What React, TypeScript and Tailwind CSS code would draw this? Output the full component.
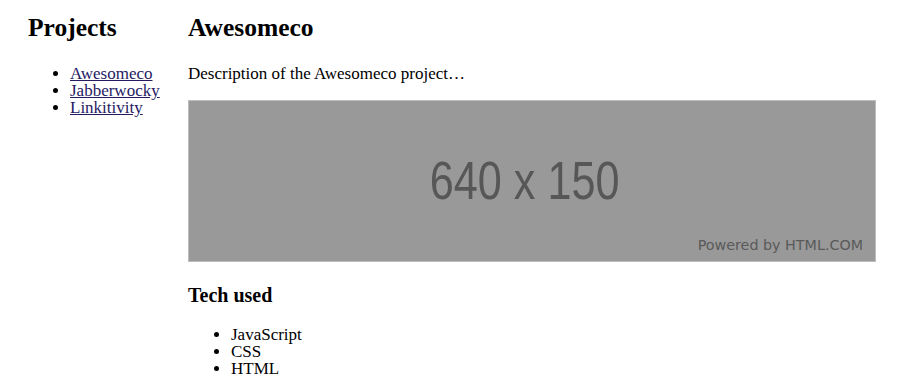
import React from 'react';

const projects = ['Awesomeco', 'Jabberwocky', 'Linkitivity'];
const tech = ['JavaScript', 'CSS', 'HTML'];

export default function App() {
  return (
    <div className="flex min-h-[389px] bg-white pl-[28px] pr-[24px] font-['Liberation_Serif','Times_New_Roman',serif] text-black">
      {/* Sidebar */}
      <nav className="w-[160px] shrink-0">
        <h1 className="mt-[13px] text-[25.5px] font-bold leading-[30px]">Projects</h1>
        <ul className="mt-[22px] list-disc pl-[42px] text-[17px] leading-[17px]">
          {projects.map((p) => (
            <li key={p}>
              <a href="#" className="text-[#261a63] underline">
                {p}
              </a>
            </li>
          ))}
        </ul>
      </nav>

      {/* Main */}
      <main className="w-[688px] shrink-0">
        <h1 className="mt-[13px] text-[25.5px] font-bold leading-[30px]">Awesomeco</h1>
        <p className="mt-[22px] text-[17px] leading-[17px]">Description of the Awesomeco project…</p>

        <div className="mt-[18px] flex h-[162px] flex-col border border-[#bdbdbd] bg-[#999999]">
          <div className="flex flex-1 items-center justify-center pt-[22px] pr-[14px]">
            <span className="inline-block scale-x-[0.8] font-['Liberation_Sans',Arial,sans-serif] text-[54px] leading-none text-[#575757]">
              640 x 150
            </span>
          </div>
          <div className="flex justify-end pr-[12px] pb-[7px]">
            <span className="font-['DejaVu_Sans',sans-serif] text-[14.3px] leading-[18px] text-[#5a5a5a]">
              Powered by HTML.COM
            </span>
          </div>
        </div>

        <h3 className="mt-[22px] text-[20px] font-bold leading-[23px]">Tech used</h3>
        <ul className="mt-[19px] list-disc pl-[43px] text-[17px] leading-[17px]">
          {tech.map((t) => (
            <li key={t}>{t}</li>
          ))}
        </ul>
      </main>
    </div>
  );
}
